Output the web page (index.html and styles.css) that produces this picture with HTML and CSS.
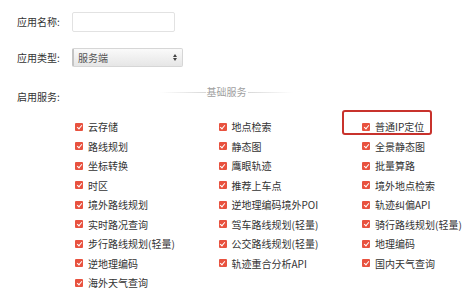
FILE: index.html
```html
<!DOCTYPE html>
<html lang="zh-CN">
<head>
  <meta charset="UTF-8">
  <meta name="viewport" content="width=device-width, initial-scale=1.0">
  <title>创建应用</title>
  <link rel="stylesheet" href="styles.css">
</head>
<body>

<div class="form">
  <div class="row">
    <span class="label">应用名称:</span>
    <div class="input"></div>
  </div>

  <div class="row row-type">
    <span class="label">应用类型:</span>
    <div class="select">
      <span>服务端</span>
      <span class="arrows"><i class="up"></i><i class="down"></i></span>
    </div>
  </div>

  <!-- 启用服务 -->
  <div class="services">
    <span class="label">启用服务:</span>
    <div class="services-body">
      <div class="divider">基础服务</div>
      <div class="grid">
        <div class="item"><span class="check"></span>云存储</div>
        <div class="item"><span class="check"></span>地点检索</div>
        <div class="item marked"><span class="check"></span>普通IP定位</div>
        <div class="item"><span class="check"></span>路线规划</div>
        <div class="item"><span class="check"></span>静态图</div>
        <div class="item"><span class="check"></span>全景静态图</div>
        <div class="item"><span class="check"></span>坐标转换</div>
        <div class="item"><span class="check"></span>鹰眼轨迹</div>
        <div class="item"><span class="check"></span>批量算路</div>
        <div class="item"><span class="check"></span>时区</div>
        <div class="item"><span class="check"></span>推荐上车点</div>
        <div class="item"><span class="check"></span>境外地点检索</div>
        <div class="item"><span class="check"></span>境外路线规划</div>
        <div class="item"><span class="check"></span>逆地理编码境外POI</div>
        <div class="item"><span class="check"></span>轨迹纠偏API</div>
        <div class="item"><span class="check"></span>实时路况查询</div>
        <div class="item"><span class="check"></span>驾车路线规划(轻量)</div>
        <div class="item"><span class="check"></span>骑行路线规划(轻量)</div>
        <div class="item"><span class="check"></span>步行路线规划(轻量)</div>
        <div class="item"><span class="check"></span>公交路线规划(轻量)</div>
        <div class="item"><span class="check"></span>地理编码</div>
        <div class="item"><span class="check"></span>逆地理编码</div>
        <div class="item"><span class="check"></span>轨迹重合分析API</div>
        <div class="item"><span class="check"></span>国内天气查询</div>
        <div class="item"><span class="check"></span>海外天气查询</div>
      </div>
    </div>
  </div>
</div>

</body>
</html>
```

FILE: styles.css
```css
body {
  margin: 0;
  background: #fff;
  font-family: "Noto Sans CJK SC", "Noto Sans", sans-serif;
  font-size: 10px;
  color: #333;
  overflow: hidden;
}
.form {
  padding: 12px 0 0 17px;
}
.row {
  display: flex;
  align-items: center;
}
.row-type {
  margin-top: 16px;
}
.label {
  width: 55px;
  line-height: 14px;
  flex-shrink: 0;
}
.input {
  width: 101px;
  height: 18px;
  border: 1px solid #e2e2e2;
  border-radius: 2px;
  background: #fff;
}
.select {
  width: 99px;
  height: 17px;
  border: 1px solid #d6d6d6;
  border-left: 2px solid #c4c4c4;
  border-radius: 2px;
  background: linear-gradient(#fafafa, #e6e6e6);
  display: flex;
  align-items: center;
  justify-content: space-between;
  padding: 0 5px 0 4px;
  color: #555;
  line-height: 14px;
}
.arrows {
  display: flex;
  flex-direction: column;
  gap: 1px;
}
.arrows i {
  width: 0;
  height: 0;
  border-left: 2px solid transparent;
  border-right: 2px solid transparent;
}
.arrows .up {
  border-bottom: 3px solid #444;
}
.arrows .down {
  border-top: 3px solid #444;
}
.services {
  display: flex;
  margin-top: 18px;
}
.services .label {
  padding-top: 5px;
}
.services-body {
  flex: 1;
  min-width: 0;
}
.divider {
  width: 133px;
  margin-left: 88px;
  display: flex;
  align-items: center;
  gap: 1px;
  color: #a0a0a0;
  line-height: 14px;
}
.divider::before,
.divider::after {
  content: "";
  flex: 1;
  height: 1px;
}
.divider::before {
  background: linear-gradient(to right, rgba(220, 220, 220, 0), #d8d8d8);
}
.divider::after {
  background: linear-gradient(to left, rgba(220, 220, 220, 0), #d8d8d8);
}
.grid {
  display: grid;
  grid-template-columns: 143.5px 143.5px 1fr;
  grid-auto-rows: 19.5px;
  margin-top: 18px;
  padding-left: 3px;
}
.item {
  display: flex;
  align-items: center;
  white-space: nowrap;
  position: relative;
  min-width: 0;
}
.check {
  width: 8px;
  height: 8px;
  margin-right: 5px;
  background: #e8523f;
  border-radius: 1px;
  position: relative;
  flex-shrink: 0;
}
.check::after {
  content: "";
  position: absolute;
  left: 2.5px;
  top: 1px;
  width: 2px;
  height: 4px;
  border-right: 1px solid #fff;
  border-bottom: 1px solid #fff;
  transform: rotate(40deg);
}
.marked::before {
  content: "";
  position: absolute;
  left: -20px;
  top: -7px;
  width: 86px;
  height: 21px;
  border: 2px solid #c8322c;
  border-radius: 3px;
}
```
